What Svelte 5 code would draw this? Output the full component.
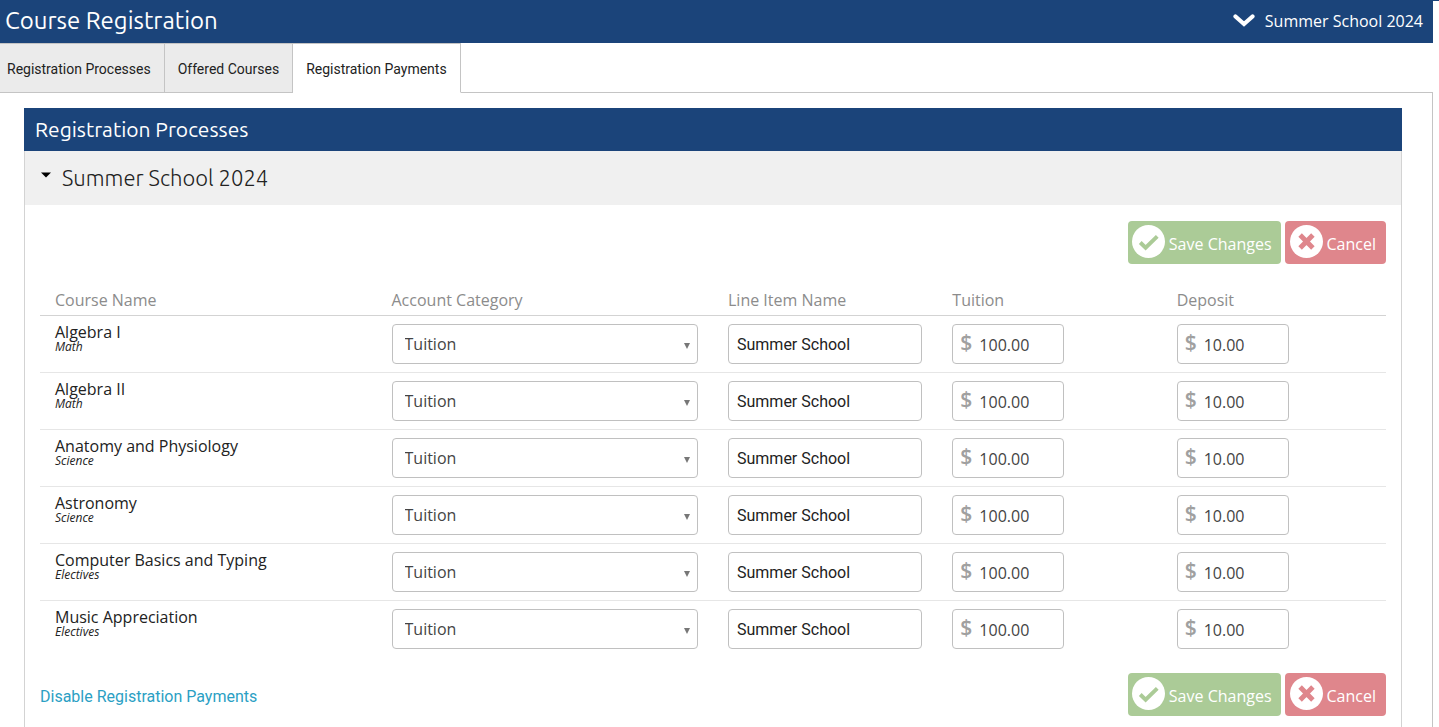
<script>
	let term = $state('Summer School 2024');
	let activeTab = $state('Registration Payments');
	let open = $state(true);

	const tabs = ['Registration Processes', 'Offered Courses', 'Registration Payments'];

	let courses = $state([
		{ name: 'Algebra I', subject: 'Math' },
		{ name: 'Algebra II', subject: 'Math' },
		{ name: 'Anatomy and Physiology', subject: 'Science' },
		{ name: 'Astronomy', subject: 'Science' },
		{ name: 'Computer Basics and Typing', subject: 'Electives' },
		{ name: 'Music Appreciation', subject: 'Electives' },
	].map((c) => ({ ...c, category: 'Tuition', lineItem: 'Summer School', tuition: '100.00', deposit: '10.00' })));
</script>

{#snippet actions()}
	<div class="actions">
		<button type="button" class="btn save">
			<svg class="btn-icon" viewBox="0 0 32 32" aria-hidden="true">
				<circle cx="16" cy="16" r="16" fill="#fff" />
				<path d="M8 17L13.2 22L24.5 11" fill="none" stroke="#abcb97" stroke-width="3.8" />
			</svg>
			<span>Save Changes</span>
		</button>
		<button type="button" class="btn cancel">
			<svg class="btn-icon" viewBox="0 0 32 32" aria-hidden="true">
				<circle cx="16" cy="16" r="16" fill="#fff" />
				<path d="M9.8 9.8L22.2 22.2M22.2 9.8L9.8 22.2" fill="none" stroke="#df868c" stroke-width="4.8" />
			</svg>
			<span>Cancel</span>
		</button>
	</div>
{/snippet}

<div class="page">
	<header class="topbar">
		<h1>Course Registration</h1>
		<button type="button" class="term">
			<svg width="22" height="14" viewBox="0 0 22 14" aria-hidden="true">
				<path d="M2.5 2.5L11 10L19.5 2.5" fill="none" stroke="#fff" stroke-width="4.2" stroke-linecap="round" stroke-linejoin="miter" />
			</svg>
			{term}
		</button>
	</header>

	<nav class="tabs">
		{#each tabs as tab}
			<button type="button" class="tab" class:active={tab === activeTab} onclick={() => (activeTab = tab)}>{tab}</button>
		{/each}
	</nav>

	<main class="content">
		<section class="panel">
			<h2 class="panel-title">Registration Processes</h2>
			<button type="button" class="accordion" aria-expanded={open} onclick={() => (open = !open)}>
				<svg width="10" height="6" viewBox="0 0 10 6" aria-hidden="true"><path d="M0 0.5H10L5 5.5Z" fill="#000" /></svg>
				<span>{term}</span>
			</button>

			{#if open}
				<div class="panel-body">
					{@render actions()}
					<table>
						<colgroup>
							<col class="wide" />
							<col class="wide" />
							<col />
							<col />
							<col />
						</colgroup>
						<thead>
							<tr>
								<th>Course Name</th>
								<th>Account Category</th>
								<th>Line Item Name</th>
								<th>Tuition</th>
								<th>Deposit</th>
							</tr>
						</thead>
						<tbody>
							{#each courses as course}
								<tr>
									<td>
										<div class="course-name">{course.name}</div>
										<div class="course-subject">{course.subject}</div>
									</td>
									<td>
										<div class="select">
											<select bind:value={course.category} aria-label="Account category for {course.name}">
												<option>Tuition</option>
											</select>
											<svg class="arrow" width="8" height="6" viewBox="0 0 8 6" aria-hidden="true"><path d="M1 0H7L4 6Z" fill="#777" /></svg>
										</div>
									</td>
									<td>
										<input class="line-item" type="text" bind:value={course.lineItem} aria-label="Line item name for {course.name}" />
									</td>
									<td>
										<label class="money">
											<span class="sign">$</span>
											<input type="text" bind:value={course.tuition} aria-label="Tuition for {course.name}" />
										</label>
									</td>
									<td>
										<label class="money">
											<span class="sign">$</span>
											<input type="text" bind:value={course.deposit} aria-label="Deposit for {course.name}" />
										</label>
									</td>
								</tr>
							{/each}
						</tbody>
					</table>
					<div class="footer">
						<a href="#disable">Disable Registration Payments</a>
						{@render actions()}
					</div>
				</div>
			{/if}
		</section>
	</main>
</div>

<style>
	:global(body) {
		background: #fff;
	}
	.page, .page * {
		box-sizing: border-box;
	}
	.page {
		display: flex;
		flex-direction: column;
		min-height: 100vh;
		padding-right: 6px;
		border-top: 1px solid #1b447a;
		font-family: 'Open Sans', sans-serif;
		font-size: 16px;
		color: #222;
	}
	button, input, select {
		margin: 0;
		font: inherit;
		color: inherit;
	}
	h1, h2 {
		margin: 0;
		font-family: Ubuntu, 'Noto Sans', sans-serif;
		font-weight: 400;
	}
	.topbar {
		display: flex;
		align-items: center;
		justify-content: space-between;
		height: 42px;
		padding: 0 10px 2px 5px;
		background: #1b447a;
		color: #fff;
	}
	h1 {
		font-size: 24px;
		line-height: 32px;
	}
	.term {
		display: flex;
		align-items: center;
		gap: 10px;
		padding: 0;
		border: 0;
		background: none;
		cursor: pointer;
	}
	.tabs {
		display: flex;
		height: 50px;
	}
	.tabs::after {
		content: '';
		flex: 1;
		border-bottom: 1px solid #c4c4c4;
	}
	.tab {
		padding: 2px 13px 0;
		border: solid #c4c4c4;
		border-width: 1px 1px 1px 0;
		background: #ebebeb;
		font-family: Roboto, sans-serif;
		font-size: 14px;
		cursor: pointer;
	}
	.tab:first-child {
		padding-left: 7px;
	}
	.tab.active {
		border-bottom-color: #fff;
		background: #fff;
	}
	.content {
		display: flex;
		flex: 1;
		padding: 15px 30px 0 24px;
		border-right: 1px solid #c4c4c4;
	}
	.panel {
		flex: 1;
		border: solid #d3d3d3;
		border-width: 0 1px;
	}
	.panel-title {
		margin: 0 -1px;
		padding: 0 11px;
		background: #1b447a;
		color: #fff;
		font-size: 21px;
		line-height: 43px;
	}
	.accordion {
		display: flex;
		align-items: center;
		gap: 11px;
		width: 100%;
		height: 54px;
		padding: 0 16px 2px;
		border: 0;
		background: #f0f0f0;
		font-family: Ubuntu, 'Noto Sans', sans-serif;
		font-size: 22px;
		font-weight: 300;
		cursor: pointer;
	}
	.accordion svg {
		margin-bottom: 4px;
	}
	.panel-body {
		padding: 16px 15px 10px;
	}
	.actions {
		display: flex;
		justify-content: flex-end;
		gap: 4px;
	}
	.btn {
		display: flex;
		gap: 4px;
		height: 43px;
		padding: 4px 9px 0 4px;
		border: 0;
		border-radius: 4px;
		color: #fff;
		line-height: 38px;
		cursor: pointer;
	}
	.save {
		background: #abcb97;
	}
	.cancel {
		padding: 4px 10px 0 5px;
		background: #df868c;
	}
	.btn-icon {
		width: 33px;
		height: 33px;
	}
	table {
		width: 100%;
		margin-top: 19px;
		table-layout: fixed;
		border-collapse: collapse;
	}
	.wide {
		width: 25%;
	}
	th {
		padding: 5px 15px 3px;
		border-bottom: 1px solid #d3d3d3;
		color: #8c8c8c;
		font-weight: 400;
		line-height: 24px;
		text-align: left;
	}
	td {
		height: 57px;
		padding: 8px 15px;
		vertical-align: top;
	}
	tbody tr:not(:last-child) td {
		border-bottom: 1px solid #e6e6e6;
	}
	.course-name {
		line-height: 16px;
	}
	.course-subject {
		font-size: 12px;
		font-style: italic;
		line-height: 14px;
	}
	.select {
		position: relative;
	}
	select, .line-item, .money {
		display: block;
		width: 100%;
		height: 40px;
		border: 1px solid #c0c0c0;
		border-radius: 4px;
		background: #fff;
	}
	select {
		appearance: none;
		padding: 0 12px;
		color: #444;
	}
	.arrow {
		position: absolute;
		top: 19px;
		right: 7px;
		pointer-events: none;
	}
	.line-item {
		padding: 0 8px;
		font-family: Roboto, sans-serif;
	}
	.money {
		display: flex;
		align-items: center;
		gap: 7px;
		width: 50%;
		min-width: 112px;
		padding: 0 7px;
		color: #444;
	}
	.sign {
		padding-bottom: 5px;
		color: #a0a0a0;
		font-size: 21px;
		font-weight: 600;
		line-height: 24px;
	}
	.money input {
		flex: 1;
		min-width: 0;
		padding: 2px 0 0;
		border: 0;
		background: none;
	}
	.footer {
		display: flex;
		align-items: center;
		justify-content: space-between;
		margin-top: 15px;
	}
	a {
		padding-top: 4px;
		color: #2b9fc4;
		font-family: Roboto, sans-serif;
		text-decoration: none;
	}
</style>
